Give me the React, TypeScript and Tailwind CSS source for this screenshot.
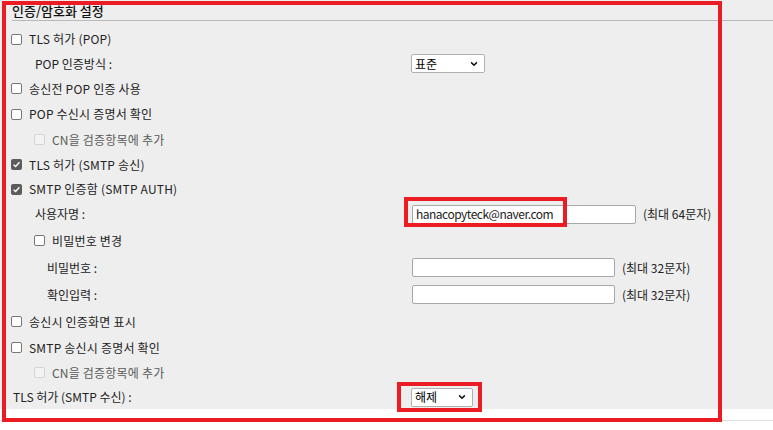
import React from "react";

const font = { fontFamily: '"Malgun Gothic", "Noto Sans CJK KR", "Noto Sans", sans-serif' };

const Check = ({ checked, disabled }: { checked?: boolean; disabled?: boolean }) => {
  if (checked) {
    return (
      <span className="flex h-[11px] w-[11px] shrink-0 items-center justify-center rounded-[2px] bg-[#5c5c5c]">
        <svg viewBox="0 0 10 10" className="h-[9px] w-[9px]">
          <path d="M1.8 5.2 4 7.3 8.3 2.6" fill="none" stroke="#fff" strokeWidth="1.6" />
        </svg>
      </span>
    );
  }
  return (
    <span
      className={
        disabled
          ? "h-[11px] w-[11px] shrink-0 rounded-[2px] border border-[#d4d4d4] bg-[#f3f3f3]"
          : "h-[11px] w-[11px] shrink-0 rounded-[2px] border border-[#767676] bg-white"
      }
    />
  );
};

const CheckRow = ({
  h,
  label,
  checked,
  disabled,
  indent,
}: {
  h: string;
  label: string;
  checked?: boolean;
  disabled?: boolean;
  indent?: boolean;
}) => (
  <div className={`flex items-center gap-[7px] ${h} ${indent ? "pl-[34px]" : "pl-[11px]"}`}>
    <Check checked={checked} disabled={disabled} />
    <span className={`tracking-[0.2px] ${disabled ? "text-[#5a5a5a]" : ""}`}>{label}</span>
  </div>
);

const Select = ({ value, w }: { value: string; w: string }) => (
  <div
    className={`flex h-[19px] ${w} items-center justify-between rounded-[2px] border border-[#b0b0b0] bg-white pl-[3px] pr-[6px] text-[12px] text-black`}
  >
    <span>{value}</span>
    <svg viewBox="0 0 10 8" className="h-[6px] w-[8px]">
      <path d="M1.2 1.8 5 5.6 8.8 1.8" fill="none" stroke="#111" strokeWidth="2" />
    </svg>
  </div>
);

const Field = ({ w, value }: { w: string; value?: string }) => (
  <div
    className={`flex h-[19px] ${w} items-center rounded-[2px] border border-[#a8a8a8] bg-white px-[3px] text-[12px] tracking-[-0.5px] text-[#222]`}
  >
    {value}
  </div>
);

export default function App() {
  return (
    <div className="relative h-[430px] w-[773px] overflow-hidden bg-white text-[12px] text-[#222]" style={font}>
      <div className="h-[409px] bg-[#eeeeee]">
        <div className="ml-[12px] flex h-[21px] items-center border-b border-[#b9b9b9] pt-[2px]">
          <span className="text-[13px] font-medium text-[#111]">인증/암호화 설정</span>
        </div>
        <div className="pt-[6px]">
          <CheckRow h="h-[24px]" label="TLS 허가 (POP)" />
          <div className="flex h-[25px] items-center">
            <span className="w-[411px] pl-[35px]">POP 인증방식 :</span>
            <Select value="표준" w="w-[74px]" />
          </div>
          <CheckRow h="h-[25px]" label="송신전 POP 인증 사용" />
          <CheckRow h="h-[26px]" label="POP 수신시 증명서 확인" />
          <CheckRow h="h-[25px]" label="CN을 검증항목에 추가" disabled indent />
          <CheckRow h="h-[25px]" label="TLS 허가 (SMTP 송신)" checked />
          <CheckRow h="h-[24px]" label="SMTP 인증함 (SMTP AUTH)" checked />
          <div className="flex h-[26px] items-center">
            <span className="w-[412px] pl-[35px]">사용자명 :</span>
            <Field w="w-[224px]" value="hanacopyteck@naver.com" />
            <span className="pl-[7px]">(최대 64문자)</span>
          </div>
          <CheckRow h="h-[27px]" label="비밀번호 변경" indent />
          <div className="flex h-[27px] items-center">
            <span className="w-[412px] pl-[47px]">비밀번호 :</span>
            <Field w="w-[203px]" />
            <span className="pl-[7px]">(최대 32문자)</span>
          </div>
          <div className="flex h-[27px] items-center">
            <span className="w-[412px] pl-[47px]">확인입력 :</span>
            <Field w="w-[203px]" />
            <span className="pl-[7px]">(최대 32문자)</span>
          </div>
          <CheckRow h="h-[27px]" label="송신시 인증화면 표시" />
          <CheckRow h="h-[25px]" label="SMTP 송신시 증명서 확인" />
          <CheckRow h="h-[25px]" label="CN을 검증항목에 추가" disabled indent />
          <div className="flex h-[24px] items-center">
            <span className="w-[411px] pl-[13px]">TLS 허가 (SMTP 수신) :</span>
            <Select value="해제" w="w-[62px]" />
          </div>
        </div>
      </div>
      <div className="mt-[11px] border-t border-[#dddddd]" />

      {/* annotation boxes */}
      <div className="pointer-events-none absolute left-[2px] top-[1px] h-[421px] w-[720px] border-4 border-[#ec1c24]" />
      <div className="pointer-events-none absolute left-[404px] top-[197px] h-[30px] w-[163px] border-4 border-[#ec1c24]" />
      <div className="pointer-events-none absolute left-[397px] top-[382px] h-[30px] w-[85px] border-4 border-[#ec1c24]" />
    </div>
  );
}
